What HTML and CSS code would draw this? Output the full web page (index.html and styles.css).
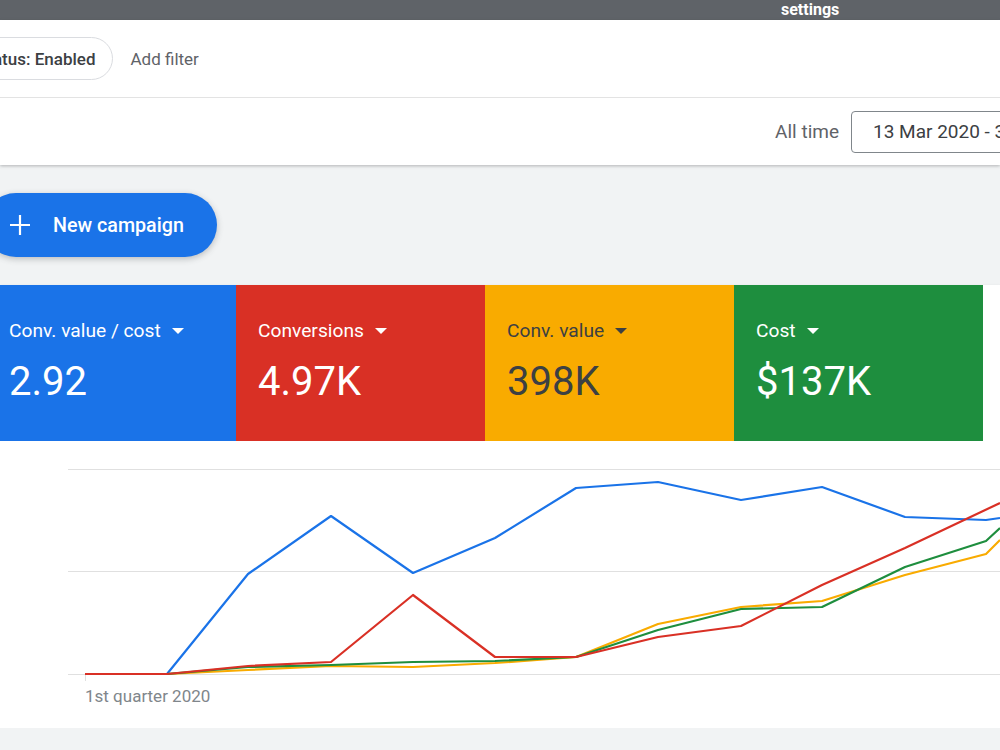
FILE: index.html
```html
<!DOCTYPE html>
<html lang="en">
<head>
    <meta charset="UTF-8">
    <meta name="viewport" content="width=device-width, initial-scale=1.0">
    <title>Campaigns</title>
    <link rel="stylesheet" href="styles.css">
</head>
<body>
    <!-- Dark strip with the page heading -->
    <div class="topbar">
        <span class="topbar-title">settings</span>
    </div>

    <!-- Filters and date range -->
    <div class="panel">
        <div class="filter-row">
            <span class="chip">Status: Enabled</span>
            <span class="add-filter">Add filter</span>
        </div>
        <div class="date-row">
            <span class="range-label">All time</span>
            <div class="date-box">13 Mar 2020 - 31 Dec 2020</div>
        </div>
    </div>

    <main class="content">
        <div class="actions">
            <button class="new-campaign" type="button">
                <svg class="plus" width="22" height="22" viewBox="0 0 22 22">
                    <path d="M11 1v20M1 11h20" stroke="#fff" stroke-width="2.2" fill="none"/>
                </svg>
                New campaign
            </button>
        </div>

        <section class="overview">
            <div class="scorecards">
                <div class="scorecard blue">
                    <div class="metric">Conv. value / cost <span class="caret"></span></div>
                    <div class="value">2.92</div>
                </div>
                <div class="scorecard red">
                    <div class="metric">Conversions <span class="caret"></span></div>
                    <div class="value">4.97K</div>
                </div>
                <div class="scorecard yellow">
                    <div class="metric">Conv. value <span class="caret"></span></div>
                    <div class="value">398K</div>
                </div>
                <div class="scorecard green">
                    <div class="metric">Cost <span class="caret"></span></div>
                    <div class="value">$137K</div>
                </div>
            </div>

            <div class="chart">
                <svg width="1000" height="287" viewBox="0 0 1000 287">
                    <!-- grid -->
                    <g stroke="#e0e0e0" stroke-width="1">
                        <line x1="68" y1="28.5" x2="1000" y2="28.5"/>
                        <line x1="68" y1="130.5" x2="1000" y2="130.5"/>
                        <line x1="68" y1="233.5" x2="1000" y2="233.5"/>
                        <line x1="85.5" y1="233" x2="85.5" y2="240"/>
                    </g>
                    <!-- series -->
                    <g fill="none" stroke-width="2.2" stroke-linejoin="round">
                        <polyline stroke="#1a73e8" points="85,233 167,233 248,133 331,75 413,132 495,97 576,47 658,41 741,59 822,46 905,76 986,79 1000,77"/>
                        <polyline stroke="#f9ab00" points="85,233 167,233 248,229 331,225 413,226 495,222 576,216 658,183 741,166 822,160 905,134 986,113 1000,99"/>
                        <polyline stroke="#1e8e3e" points="85,233 167,233 248,226 331,224 413,221 495,220 576,216 658,189 741,168 822,166 905,126 986,100 1000,87"/>
                        <polyline stroke="#d93025" points="85,233 167,233 248,225 331,221 413,154 495,216 576,216 658,196 741,185 822,144 905,107 1000,62"/>
                    </g>
                    <text class="axis-label" x="85" y="261">1st quarter 2020</text>
                </svg>
            </div>
        </section>
    </main>
</body>
</html>
```

FILE: styles.css
```css
/* Page base */
body {
    margin: 0;
    font-family: Roboto, "Liberation Sans", Arial, sans-serif;
    background-color: #f1f3f4;
    color: #3c4043;
    overflow: hidden;
}

.topbar {
    height: 20px;
    background: #5f6368;
    padding-left: 781px;
}
.topbar-title {
    color: white;
    font-size: 16px;
    font-weight: 700;
    line-height: 19px;
    display: block;
}

/* Filters + date range */
.panel {
    background: white;
    box-shadow: 0 1px 3px rgba(60, 64, 67, 0.35);
    position: relative;
}
.filter-row {
    height: 77px;
    display: flex;
    align-items: center;
    gap: 18px;
    border-bottom: 1px solid #e3e3e3;
}
.chip {
    margin-left: -40px;
    height: 41px;
    padding: 0 16px;
    border: 1px solid #dadce0;
    border-radius: 22px;
    display: flex;
    align-items: center;
    font-size: 17px;
    font-weight: 500;
    color: #3c4043;
}
.add-filter {
    font-size: 17px;
    color: #5f6368;
}
.date-row {
    height: 67px;
    display: flex;
    align-items: center;
    justify-content: flex-end;
    gap: 12px;
    overflow: hidden;
}
.range-label {
    font-size: 19px;
    color: #5f6368;
}
.date-box {
    flex-shrink: 0;
    width: 220px;
    height: 40px;
    margin-right: -94px;
    padding-left: 21px;
    border: 1px solid #80868b;
    border-radius: 4px;
    display: flex;
    align-items: center;
    font-size: 19px;
    color: #3c4043;
    white-space: nowrap;
}

/* Action bar */
.actions {
    padding: 28px 0;
}
.new-campaign {
    margin-left: -16px;
    height: 64px;
    padding: 0 33px 0 25px;
    border: none;
    border-radius: 32px;
    background: #1a73e8;
    color: white;
    font-family: Roboto, "Liberation Sans", Arial, sans-serif;
    font-size: 19.7px;
    font-weight: 500;
    display: flex;
    align-items: center;
    gap: 22px;
    box-shadow: 0 2px 6px rgba(60, 64, 67, 0.3);
    cursor: pointer;
}

/* Scorecards and chart */
.overview {
    background: white;
    box-shadow: 0 2px 3px rgba(60, 64, 67, 0.4);
}
.scorecards {
    display: flex;
    margin-left: -13px;
}
.scorecard {
    width: 249px;
    height: 156px;
    box-sizing: border-box;
    padding: 35px 22px 0;
    color: white;
}
.scorecard.blue { background: #1a73e8; }
.scorecard.red { background: #d93025; }
.scorecard.yellow { background: #f9ab00; color: #3c4043; }
.scorecard.green { background: #1e8e3e; }

.metric {
    font-size: 19.2px;
    line-height: 22px;
    display: flex;
    align-items: center;
    gap: 11px;
}
.caret {
    width: 0;
    height: 0;
    border-left: 6px solid transparent;
    border-right: 6px solid transparent;
    border-top: 6px solid currentColor;
}
.value {
    margin-top: 16px;
    font-size: 40px;
    line-height: 48px;
}

.chart {
    height: 287px;
}
.chart svg {
    display: block;
}
.axis-label {
    font-family: Roboto, "Liberation Sans", Arial, sans-serif;
    font-size: 17px;
    fill: #80868b;
}
```
